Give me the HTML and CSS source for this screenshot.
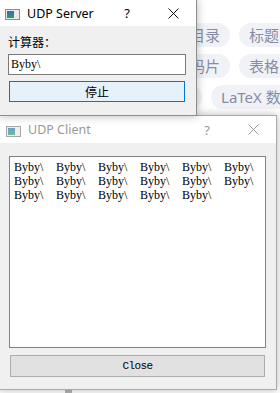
FILE: index.html
```html
<!DOCTYPE html>
<html lang="zh-CN">
  <head>
    <meta charset="UTF-8" />
    <meta name="viewport" content="width=device-width, initial-scale=1.0" />
    <title>UDP</title>
    <link rel="stylesheet" href="styles.css">
  </head>
  <body>
    <!-- 背景のページ (タグ一覧) -->
    <div class="backdrop">
      <div class="tag-row row-1">
        <span class="tag">目录</span>
        <span class="tag">标题</span>
      </div>
      <div class="tag-row row-2">
        <span class="tag">码片</span>
        <span class="tag">表格</span>
      </div>
      <div class="tag-row row-3">
        <span class="tag">公式</span>
        <span class="tag">LaTeX 数</span>
      </div>
      <div class="scroll-mark"></div>
    </div>

    <!-- クライアント窓 (後ろ) -->
    <div class="window client-window inactive">
      <div class="title-bar">
        <svg class="app-icon" width="15" height="11" viewBox="0 0 15 11">
          <rect x="0.5" y="0.5" width="14" height="10" fill="#e9e9e9" stroke="#8c8c8c" />
          <rect x="2" y="2" width="7" height="7" fill="url(#g2)" />
          <defs>
            <linearGradient id="g2" x1="0" y1="0" x2="0" y2="1">
              <stop offset="0" stop-color="#3a7fbf" />
              <stop offset="1" stop-color="#3fa77a" />
            </linearGradient>
          </defs>
        </svg>
        <span class="title-text">UDP Client</span>
        <span class="title-btn">?</span>
        <span class="title-btn">
          <svg width="11" height="11" viewBox="0 0 11 11">
            <path d="M0.5 0.5 L10.5 10.5 M10.5 0.5 L0.5 10.5" stroke="#9a9a9a" stroke-width="1" />
          </svg>
        </span>
      </div>
      <div class="client-body">
        <div class="text-view">
          <div class="msg-row">
            <span>Byby\</span><span>Byby\</span><span>Byby\</span><span>Byby\</span><span>Byby\</span><span>Byby\</span>
          </div>
          <div class="msg-row">
            <span>Byby\</span><span>Byby\</span><span>Byby\</span><span>Byby\</span><span>Byby\</span><span>Byby\</span>
          </div>
          <div class="msg-row">
            <span>Byby\</span><span>Byby\</span><span>Byby\</span><span>Byby\</span><span>Byby\</span>
          </div>
        </div>
        <button class="close-button">Close</button>
      </div>
    </div>

    <!-- サーバー窓 (前面) -->
    <div class="window server-window">
      <div class="title-bar">
        <svg class="app-icon" width="15" height="11" viewBox="0 0 15 11">
          <rect x="0.5" y="0.5" width="14" height="10" fill="#e9e9e9" stroke="#8c8c8c" />
          <rect x="2" y="2" width="7" height="7" fill="url(#g1)" />
          <defs>
            <linearGradient id="g1" x1="0" y1="0" x2="0" y2="1">
              <stop offset="0" stop-color="#2f6fb5" />
              <stop offset="1" stop-color="#2f9a6a" />
            </linearGradient>
          </defs>
        </svg>
        <span class="title-text">UDP Server</span>
        <span class="title-btn">?</span>
        <span class="title-btn">
          <svg width="11" height="11" viewBox="0 0 11 11">
            <path d="M0.5 0.5 L10.5 10.5 M10.5 0.5 L0.5 10.5" stroke="#111" stroke-width="1" />
          </svg>
        </span>
      </div>
      <div class="server-body">
        <label class="field-label" for="msgInput">计算器：</label>
        <input id="msgInput" class="msg-input" type="text" value="Byby\" />
        <button class="stop-button">停止</button>
      </div>
    </div>
  </body>
</html>
```

FILE: styles.css
```css
body {
  margin: 0;
  width: 280px;
  height: 393px;
  overflow: hidden;
  position: relative;
  background-color: #fff;
  font-family: "Noto Sans", "Noto Sans CJK SC", sans-serif;
}

/* 背景ページ */
.backdrop {
  display: flex;
  flex-direction: column;
  gap: 7px;
  padding-top: 23px;
  overflow: hidden;
}
.tag-row {
  display: flex;
  gap: 9px;
  white-space: nowrap;
}
.row-1,
.row-2 {
  margin-left: 180px;
}
.row-3 {
  margin-left: 152px;
}
.tag {
  height: 24px;
  line-height: 24px;
  padding: 0 10px;
  border-radius: 12px;
  background-color: #f0f2f7;
  color: #878ca3;
  font-family: "Noto Sans", "Noto Sans CJK SC", sans-serif;
  font-size: 15px;
}
.scroll-mark {
  position: absolute;
  left: 65px;
  top: 388px;
  width: 7px;
  height: 6px;
  background-color: #b4b4b4;
}

/* 窓共通 */
.window {
  position: absolute;
  box-sizing: border-box;
  display: flex;
  flex-direction: column;
  background-color: #f0f0f0;
  box-shadow: 0 0 9px rgba(0, 0, 0, 0.28);
}
.title-bar {
  display: flex;
  align-items: center;
  background-color: #fff;
  font-size: 12.5px;
  color: #000;
}
.app-icon {
  margin: 0 7px 0 5px;
  flex-shrink: 0;
}
.title-text {
  flex: 1;
  white-space: nowrap;
}
.title-btn {
  width: 46px;
  display: flex;
  justify-content: center;
  align-items: center;
  font-size: 13px;
}

/* サーバー窓 */
.server-window {
  left: -1px;
  top: -1px;
  width: 198px;
  height: 117px;
  border: 1px solid #8d8d8d;
}
.server-window .title-bar {
  height: 26px;
}
.server-window .app-icon {
  margin-top: 2px;
}
.server-body {
  display: flex;
  flex-direction: column;
  align-items: flex-start;
  padding: 8px 0 0 8px;
}
.field-label {
  font-family: "Noto Sans CJK SC", sans-serif;
  font-size: 12px;
  line-height: 16px;
  color: #000;
}
.msg-input {
  box-sizing: border-box;
  margin: 4px 0 0;
  width: 178px;
  height: 21px;
  padding: 0 2px;
  border: 1px solid #7a7a7a;
  background-color: #fff;
  font-family: "Liberation Serif", serif;
  font-size: 12px;
  color: #000;
  outline: none;
}
.stop-button {
  box-sizing: border-box;
  margin: 6px 0 0 1px;
  width: 176px;
  height: 21px;
  padding: 0;
  border: 1px solid #0078d7;
  background-color: #e5f1fb;
  font-family: "Noto Sans CJK SC", sans-serif;
  font-size: 12px;
  color: #000;
}

/* クライアント窓 */
.client-window {
  left: -1px;
  top: 115px;
  width: 278px;
  height: 275px;
  border: 1px solid #a9a9a9;
}
.client-window .title-bar {
  height: 27px;
  color: #999;
}
.client-window .app-icon {
  margin-left: 6px;
  margin-top: 3px;
  opacity: 0.75;
}
.client-body {
  display: flex;
  flex-direction: column;
  align-items: flex-start;
  padding: 13px 0 0 9px;
}
.text-view {
  box-sizing: border-box;
  width: 257px;
  height: 192px;
  padding: 3px 0 0 4px;
  border: 1px solid #828282;
  background-color: #fff;
}
.msg-row {
  display: flex;
  gap: 14px;
  height: 14px;
  line-height: 14px;
}
.msg-row span {
  width: 28px;
  white-space: nowrap;
  font-family: "Liberation Serif", serif;
  font-size: 12px;
  color: #000;
}
.close-button {
  box-sizing: border-box;
  margin: 7px 0 0 1px;
  width: 255px;
  height: 22px;
  padding: 0;
  border: 1px solid #adadad;
  background-color: #e1e1e1;
  font-family: "Liberation Mono", monospace;
  font-size: 11px;
  letter-spacing: -0.6px;
  color: #000;
}
```
